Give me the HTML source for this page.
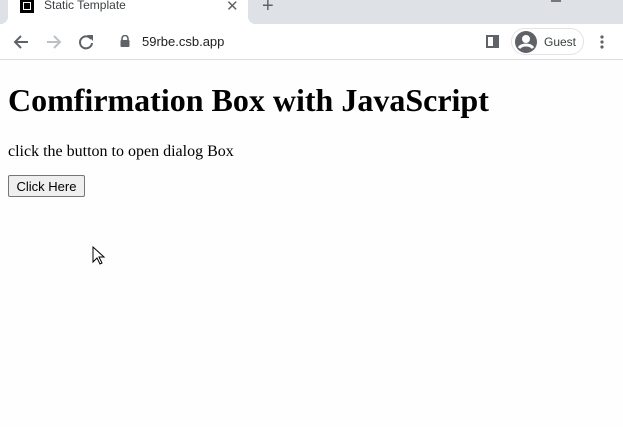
<!DOCTYPE html>
<html><head><meta charset="utf-8"><style>
*{box-sizing:border-box}
html,body{margin:0;padding:0;width:623px;height:427px;overflow:hidden;background:#fefefe}
.strip{position:absolute;left:0;top:0;width:623px;height:24px;background:#dee1e6}
.tab{position:absolute;left:8px;top:0;width:240px;height:24px;background:#fff}
.tab:before{content:"";position:absolute;left:-8px;bottom:0;width:8px;height:8px;background:radial-gradient(circle at 0 0,#dee1e6 8px,#fff 8.5px)}
.tab:after{content:"";position:absolute;right:-8px;bottom:0;width:8px;height:8px;background:radial-gradient(circle at 100% 0,#dee1e6 8px,#fff 8.5px)}
.fav{position:absolute;left:12px;top:0;width:14px;height:13px;background:#000}
.fav i{position:absolute;left:3px;top:2px;width:8px;height:8px;border:1.5px solid #fff}
.ttl{position:absolute;left:36px;top:-2px;font:12px "Liberation Sans",sans-serif;color:#3c4043}
.x{position:absolute;left:218px;top:-3px;font:15px "Liberation Sans",sans-serif;color:#5f6368}
.plus{position:absolute;left:262px;top:-5px;font:20px "Liberation Sans",sans-serif;color:#5f6368}
.bar{position:absolute;left:0;top:24px;width:623px;height:36px;background:#fff;border-bottom:1px solid #dadce0}
.url{position:absolute;left:142px;top:10px;font:13px "Liberation Sans",sans-serif;color:#202124}
.guest{position:absolute;left:511px;top:4px;width:73px;height:27px;border:1px solid #e3e3e3;border-radius:14px}
.guest span{position:absolute;left:32px;top:6px;font:12px "Liberation Sans",sans-serif;color:#3c4043}
.page{position:absolute;left:0;top:61px;width:623px;font-family:"Liberation Serif",serif;padding:0 8px}
h1{font-size:32px;margin:21px 0 0;line-height:37px}
p{font-size:16px;margin:24px 0 0;line-height:18px}
button{display:block;margin-top:14px;font:13px "Liberation Sans",sans-serif;padding:1px 7px;height:22px;width:77px;border:1px solid #767676;border-radius:2px;background:#efefef;color:#000}
</style></head><body>
<div class="strip"><div class="tab"><div class="fav"><i></i></div><div class="ttl">Static Template</div><div class="x">✕</div></div><div class="plus">+</div>
<div style="position:absolute;left:551px;top:0;width:10px;height:2px;background:#777"></div></div>
<div class="bar">
<svg style="position:absolute;left:12px;top:9px" width="18" height="18" viewBox="0 0 18 18"><path d="M16 9H3M9 3L3 9l6 6" stroke="#5f6368" stroke-width="2" fill="none"/></svg>
<svg style="position:absolute;left:45px;top:9px" width="18" height="18" viewBox="0 0 18 18"><path d="M2 9h13M9 3l6 6-6 6" stroke="#bdc1c6" stroke-width="2" fill="none"/></svg>
<svg style="position:absolute;left:77px;top:9px" width="18" height="18" viewBox="0 0 18 18"><path d="M14 6A6 6 0 1 0 15 10" stroke="#5f6368" stroke-width="2" fill="none"/><path d="M10 2h6v6z" fill="#5f6368"/></svg>
<svg style="position:absolute;left:120px;top:11px" width="10" height="12" viewBox="0 0 10 12"><path d="M2 5V3.5a3 3 0 0 1 6 0V5" stroke="#5f6368" stroke-width="1.6" fill="none"/><rect x="0.5" y="5" width="9" height="7" rx="1" fill="#5f6368"/></svg>
<div class="url">59rbe.csb.app</div>
<div style="position:absolute;left:486px;top:11px;width:13px;height:13px;border:2px solid #5f6368;border-right-width:6px"></div>
<div class="guest"><svg style="position:absolute;left:2px;top:1px" width="24" height="24" viewBox="0 0 24 24"><circle cx="12" cy="12" r="11" fill="#5f6368"/><circle cx="12" cy="9" r="4" fill="#fff"/><path d="M5 18c3-4 11-4 14 0" stroke="#fff" stroke-width="3" fill="none"/></svg><span>Guest</span></div>
<svg style="position:absolute;left:600px;top:11px" width="4" height="14"><circle cx="2" cy="2" r="1.6" fill="#5f6368"/><circle cx="2" cy="7" r="1.6" fill="#5f6368"/><circle cx="2" cy="12" r="1.6" fill="#5f6368"/></svg>
</div>
<div class="page"><h1>Comfirmation Box with JavaScript</h1><p>click the button to open dialog Box</p><button>Click Here</button></div>
<svg style="position:absolute;left:92px;top:246px" width="14" height="20" viewBox="0 0 14 20"><path d="M1 1v15l4-4 3 6 2-1-3-6h5z" fill="#fff" stroke="#000" stroke-width="1"/></svg>
</body></html>
